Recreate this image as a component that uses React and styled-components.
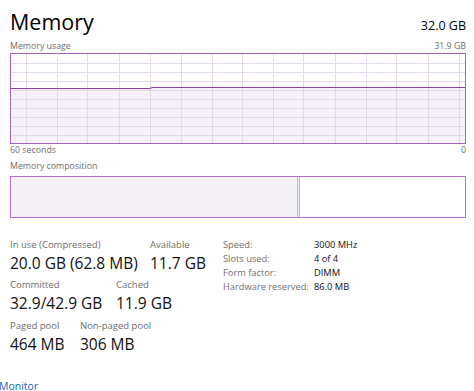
import React from "react";
import styled, { createGlobalStyle } from "styled-components";

const Global = createGlobalStyle`
  html, body { margin: 0; padding: 0; background: #ffffff; }
  body { font-family: "Open Sans", "Noto Sans", "Liberation Sans", sans-serif; color: #000; overflow: hidden; }
`;

const Page = styled.div`
  width: 474px;
  height: 391px;
  box-sizing: border-box;
  padding: 0 8px 0 10px;
  display: flex;
  flex-direction: column;
  position: relative;
  overflow: hidden;
`;

const Header = styled.div`
  display: flex;
  justify-content: space-between;
  align-items: baseline;
  height: 40px;
  padding-top: 7px;
  box-sizing: border-box;
`;

const Title = styled.div`
  font-size: 21.5px;
  font-weight: 400;
  line-height: 30px;
`;

const Total = styled.div`
  font-size: 12.5px;
  line-height: 30px;
`;

const SmallRow = styled.div`
  display: flex;
  justify-content: space-between;
  font-size: 8.8px;
  line-height: 13px;
  color: #707070;
  height: ${(p) => p.$h || 13}px;
  align-items: ${(p) => p.$align || "center"};
`;

const ChartBox = styled.div`
  height: 89px;
  border: 1px solid #a064ba;
  background: #fff;
  position: relative;
`;

const ChartSvg = styled.svg`
  display: block;
  width: 100%;
  height: 100%;
`;

const CompBar = styled.div`
  height: 40px;
  border: 1px solid #b36fcb;
  display: flex;
`;

const CompSeg = styled.div`
  flex: ${(p) => p.$flex};
  background: ${(p) => p.$bg};
  border-right: ${(p) => (p.$divider ? "3px double #c5b6cc" : "none")};
`;

const Stats = styled.div`
  display: flex;
  margin-top: 20px;
`;

const LeftStats = styled.div`
  width: 213px;
  display: flex;
  flex-direction: column;
`;

const StatRow = styled.div`
  display: flex;
  height: ${(p) => p.$h}px;
`;

const Stat = styled.div`
  width: ${(p) => p.$w}px;
  display: flex;
  flex-direction: column;
`;

const StatLabel = styled.div`
  font-size: 9.5px;
  line-height: 14px;
  color: #6d6d6d;
  white-space: nowrap;
`;

const StatValue = styled.div`
  font-size: 15.5px;
  line-height: 22px;
  color: #111;
  white-space: nowrap;
`;

const Props = styled.div`
  display: grid;
  grid-template-columns: 91px auto;
  grid-auto-rows: 14px;
  font-size: 9.3px;
  line-height: 14px;
`;

const PropKey = styled.div`
  color: #707070;
  white-space: nowrap;
`;

const PropVal = styled.div`
  color: #111;
  white-space: nowrap;
`;

const Link = styled.a`
  position: absolute;
  left: -1px;
  top: 379px;
  font-size: 10.5px;
  line-height: 14px;
  color: #1a66c2;
  text-decoration: none;
`;

function UsageChart() {
  const W = 454;
  const H = 89;
  const vx = [15, 46, 76, 108, 139, 170, 201, 231, 262, 292, 324, 355, 385, 417, 448];
  const hy = [];
  for (let k = 1; k < 10; k++) hy.push(k * 8.95);
  const lineY = 34;
  return (
    <ChartSvg viewBox={`0 0 ${W} ${H}`} preserveAspectRatio="none">
      <path d={`M0 ${lineY} L138 ${lineY} L142 ${lineY - 1} L${W} ${lineY - 1} L${W} ${H} L0 ${H} Z`} fill="#f6f0f8" />
      {vx.map((x) => (
        <line key={"v" + x} x1={x + 0.5} y1={0} x2={x + 0.5} y2={H} stroke="#e6d8ec" strokeWidth="1" />
      ))}
      {hy.map((y) => (
        <line key={"h" + y} x1={0} y1={Math.round(y) + 0.5} x2={W} y2={Math.round(y) + 0.5} stroke="#e6d8ec" strokeWidth="1" />
      ))}
      <path d={`M0 ${lineY + 0.5} L138 ${lineY + 0.5} L142 ${lineY - 0.5} L${W} ${lineY - 0.5}`} fill="none" stroke="#8a3fa8" strokeWidth="1.2" />
    </ChartSvg>
  );
}

export default function App() {
  return (
    <>
      <Global />
      <Page>
        <Header>
          <Title>Memory</Title>
          <Total>32.0 GB</Total>
        </Header>
        <SmallRow $h={13}>
          <span>Memory usage</span>
          <span>31.9 GB</span>
        </SmallRow>
        <ChartBox>
          <UsageChart />
        </ChartBox>
        <SmallRow $h={13}>
          <span>60 seconds</span>
          <span>0</span>
        </SmallRow>
        <SmallRow $h={19} $align="center">
          <span>Memory composition</span>
        </SmallRow>
        <CompBar>
          <CompSeg $flex="0 0 286px" $bg="#f4f2f6" $divider />
          <CompSeg $flex="1" $bg="#ffffff" />
        </CompBar>
        <Stats>
          <LeftStats>
            <StatRow $h={40}>
              <Stat $w={140}>
                <StatLabel>In use (Compressed)</StatLabel>
                <StatValue>20.0 GB (62.8 MB)</StatValue>
              </Stat>
              <Stat $w={70}>
                <StatLabel>Available</StatLabel>
                <StatValue>11.7 GB</StatValue>
              </Stat>
            </StatRow>
            <StatRow $h={41}>
              <Stat $w={106}>
                <StatLabel>Committed</StatLabel>
                <StatValue>32.9/42.9 GB</StatValue>
              </Stat>
              <Stat $w={90}>
                <StatLabel>Cached</StatLabel>
                <StatValue>11.9 GB</StatValue>
              </Stat>
            </StatRow>
            <StatRow $h={41}>
              <Stat $w={70}>
                <StatLabel>Paged pool</StatLabel>
                <StatValue>464 MB</StatValue>
              </Stat>
              <Stat $w={110}>
                <StatLabel>Non-paged pool</StatLabel>
                <StatValue>306 MB</StatValue>
              </Stat>
            </StatRow>
          </LeftStats>
          <Props>
            <PropKey>Speed:</PropKey>
            <PropVal>3000 MHz</PropVal>
            <PropKey>Slots used:</PropKey>
            <PropVal>4 of 4</PropVal>
            <PropKey>Form factor:</PropKey>
            <PropVal>DIMM</PropVal>
            <PropKey>Hardware reserved:</PropKey>
            <PropVal>86.0 MB</PropVal>
          </Props>
        </Stats>
        <Link href="#">Monitor</Link>
      </Page>
    </>
  );
}
